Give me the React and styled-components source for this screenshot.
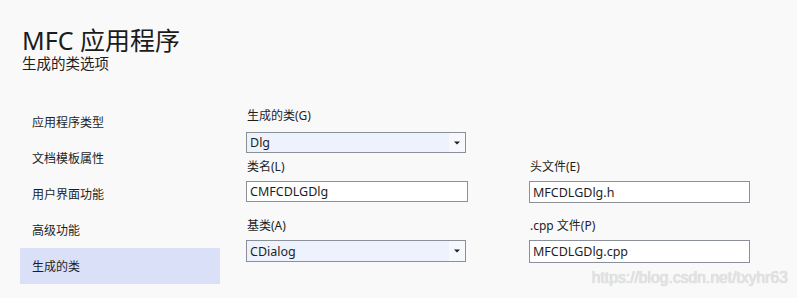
import React from "react";
import styled, { createGlobalStyle } from "styled-components";

const Global = createGlobalStyle`
  html, body { margin: 0; padding: 0; background: #f9f9fa; }
  body {
    width: 797px; height: 298px; overflow: hidden;
    font-family: "Noto Sans", "Noto Sans CJK SC", sans-serif;
    color: #1e1e1e;
  }
`;

const Page = styled.div`
  position: relative;
  width: 797px;
  height: 298px;
  background: #f9f9fa;
  box-sizing: border-box;
  padding-top: 26px;
`;

const Header = styled.header`
  padding-left: 22px;
  display: flex;
  flex-direction: column;
`;

const Title = styled.h1`
  margin: 0;
  font-size: 25px;
  font-weight: 400;
  line-height: 28px;
  color: #1b1b1b;
`;

const Subtitle = styled.div`
  font-size: 14.5px;
  line-height: 18px;
  color: #1e1e1e;
`;

const Main = styled.div`
  display: flex;
  margin-top: 32px;
  padding-left: 20px;
  gap: 26px;
`;

const Nav = styled.nav`
  width: 200px;
  display: flex;
  flex-direction: column;
`;

const NavItem = styled.div`
  height: 36px;
  display: flex;
  align-items: center;
  padding-left: 12px;
  font-size: 12px;
  color: #1e1e1e;
  background: ${(p) => (p.$active ? "#dae0f7" : "transparent")};
`;

const Form = styled.div`
  padding-top: 4px;
  display: flex;
  flex-direction: column;
`;

const Row = styled.div`
  display: grid;
  grid-template-columns: 222px 221px;
  column-gap: 61px;
  margin-top: ${(p) => p.$mt || 0}px;
`;

const Field = styled.div`
  display: flex;
  flex-direction: column;
  gap: ${(p) => p.$gap || 6}px;
`;

const Label = styled.label`
  font-size: 12px;
  line-height: 16px;
  padding-left: 1px;
  color: #1e1e1e;
`;

const TextBox = styled.div`
  box-sizing: border-box;
  height: ${(p) => p.$h || 21}px;
  width: ${(p) => p.$w || 222}px;
  border: 1px solid #8b9098;
  background: #ffffff;
  display: flex;
  align-items: center;
  padding-left: 3px;
  font-size: 12.5px;
  color: #1e1e1e;
`;

const Combo = styled.div`
  box-sizing: border-box;
  height: ${(p) => p.$h || 21}px;
  width: 220px;
  border: 1px solid #8b9098;
  background: #eef2fc;
  display: flex;
  align-items: center;
  font-size: 12.5px;
  color: #1e1e1e;
`;

const ComboText = styled.div`
  flex: 1;
  padding-left: 3px;
`;

const ComboButton = styled.div`
  width: 15px;
  align-self: stretch;
  background: #f6f8fd;
  display: flex;
  align-items: center;
  justify-content: center;
  padding-right: 1px;
`;

const Watermark = styled.div`
  position: absolute;
  right: 9px;
  bottom: 11px;
  font-family: "Liberation Sans", Arial, sans-serif;
  font-size: 15.7px;
  line-height: 18px;
  color: #e4e4e4;
  text-shadow: 0 0 1px #bdbdbd;
`;

const Arrow = () => (
  <svg width="6" height="4" viewBox="0 0 6 4">
    <path d="M0 0.5 H6 L3 3.5 Z" fill="#1e1e1e" />
  </svg>
);

const navItems = ["应用程序类型", "文档模板属性", "用户界面功能", "高级功能", "生成的类"];

export default function App() {
  return (
    <>
      <Global />
      <Page>
        <Header>
          <Title>MFC 应用程序</Title>
          <Subtitle>生成的类选项</Subtitle>
        </Header>
        <Main>
          <Nav>
            {navItems.map((t, i) => (
              <NavItem key={t} $active={i === navItems.length - 1}>
                {t}
              </NavItem>
            ))}
          </Nav>
          <Form>
            <Row>
              <Field $gap={8}>
                <Label>生成的类(G)</Label>
                <Combo>
                  <ComboText>Dlg</ComboText>
                  <ComboButton>
                    <Arrow />
                  </ComboButton>
                </Combo>
              </Field>
            </Row>
            <Row $mt={6}>
              <Field>
                <Label>类名(L)</Label>
                <TextBox>CMFCDLGDlg</TextBox>
              </Field>
              <Field>
                <Label>头文件(E)</Label>
                <TextBox $w={221} $h={22}>MFCDLGDlg.h</TextBox>
              </Field>
            </Row>
            <Row $mt={15}>
              <Field>
                <Label>基类(A)</Label>
                <Combo $h={22}>
                  <ComboText>CDialog</ComboText>
                  <ComboButton>
                    <Arrow />
                  </ComboButton>
                </Combo>
              </Field>
              <Field>
                <Label>.cpp 文件(P)</Label>
                <TextBox $w={221} $h={23}>MFCDLGDlg.cpp</TextBox>
              </Field>
            </Row>
          </Form>
        </Main>
        <Watermark>https://blog.csdn.net/txyhr63</Watermark>
      </Page>
    </>
  );
}
